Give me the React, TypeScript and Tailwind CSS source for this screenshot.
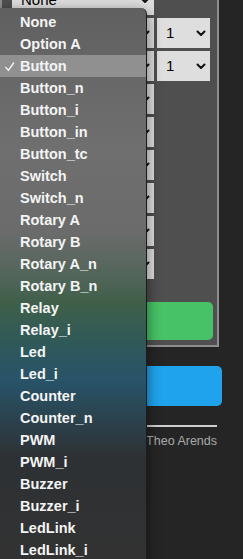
import React from 'react'

const options = [
  'None', 'Option A', 'Button', 'Button_n', 'Button_i', 'Button_in', 'Button_tc',
  'Switch', 'Switch_n', 'Rotary A', 'Rotary B', 'Rotary A_n', 'Rotary B_n',
  'Relay', 'Relay_i', 'Led', 'Led_i', 'Counter', 'Counter_n', 'PWM', 'PWM_i',
  'Buzzer', 'Buzzer_i', 'LedLink', 'LedLink_i',
]

function Chevron() {
  return (
    <svg width="10" height="7" viewBox="0 0 10 7" className="shrink-0">
      <polyline points="1.5,1.5 5,5 8.5,1.5" fill="none" stroke="#111" strokeWidth="2" strokeLinecap="round" strokeLinejoin="round" />
    </svg>
  )
}

function SelectBox({ label, className }: { label?: string, className?: string }) {
  return (
    <div className={`flex h-[30px] items-center justify-between bg-[#dedede] pl-[9px] pr-[4px] text-[15px] text-black ${className ?? ''}`}>
      <span>{label}</span>
      <Chevron />
    </div>
  )
}

// label only on the top row, the rest sits under the open menu
const rows = [
  { main: 'None', index: false },
  { main: '', index: true },
  { main: '', index: true },
  { main: '', index: false },
  { main: '', index: false },
  { main: '', index: false },
  { main: '', index: false },
  { main: '', index: false },
  { main: '', index: false },
]

function Menu({ selected }: { selected: string }) {
  return (
    <div className="absolute left-[-6px] top-[8px] h-[560px] w-[153px] overflow-hidden rounded-[6px] border-r border-[#1c1c1c] bg-[linear-gradient(to_bottom,#606060_0px,#6f6f6f_140px,#6a6b6a_225px,#52655a_268px,#3f5f49_295px,#2f5959_335px,#285369_372px,#2b4552_405px,#2d3134_450px,#323232_551px)] pt-[3px] shadow-[0_4px_14px_rgba(0,0,0,0.5)]">
      {options.map((o) => (
        <div
          key={o}
          className={`relative flex h-[22px] items-center pl-[26px] text-[14.5px] font-bold leading-none text-[#f4f4f4] ${o === selected ? 'bg-[#909090]' : ''}`}
        >
          {o === selected && (
            <svg width="10" height="10" viewBox="0 0 10 10" className="absolute left-[11px] top-[7px]">
              <polyline points="0.8,5.4 3.4,8.4 8.6,1" fill="none" stroke="#f4f4f4" strokeWidth="1.4" strokeLinecap="round" strokeLinejoin="round" />
            </svg>
          )}
          {o}
        </div>
      ))}
    </div>
  )
}

export default function App() {
  return (
    <div className="relative h-[559px] w-[243px] overflow-hidden bg-[#252525] font-['Liberation_Sans',Arial,sans-serif]">
      <div className="-mt-[21px] flex w-[222px] flex-col">
        <fieldset className="mr-[3px] flex flex-col border-2 border-[#8e8e8e] bg-[#4f4f4f] px-[4px] pb-[5px] pt-[4px]">
          <div className="flex flex-col gap-[3px]">
            {rows.map((r, i) => (
              <div key={i} className="flex gap-[3px] pl-[6px] pr-[3px]">
                <SelectBox label={r.main} className="w-[142px]" />
                {r.index && <SelectBox label="1" className="w-[53px]" />}
              </div>
            ))}
          </div>
          <button className="mt-[23px] h-[38px] rounded-[5px] bg-[#47c266]" />
        </fieldset>

        <button className="mt-[19px] h-[40px] rounded-[5px] bg-[#1fa3ec]" />

        <div className="mr-[5px] mt-[19px] text-right text-[12.5px] text-[#aaaaaa]">
          <hr className="border-t-2 border-[#cfcfcf]" />
          <div className="mt-[5px]">Theo Arends</div>
        </div>
      </div>

      <Menu selected="Button" />
    </div>
  )
}
